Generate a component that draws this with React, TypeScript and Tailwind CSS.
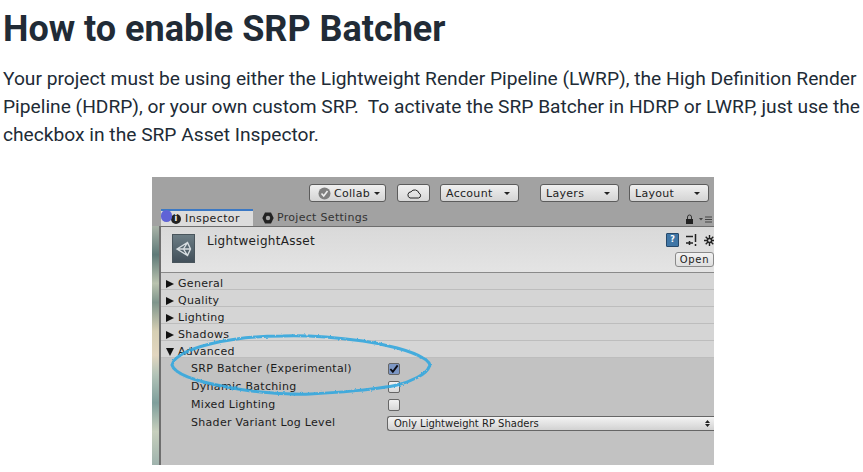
const uiFont = "font-['DejaVu_Sans',sans-serif]";

function Caret() {
  return <span className="ml-auto h-0 w-0 border-x-[3px] border-t-[3px] border-x-transparent border-t-[#222]" />;
}

function ToolButton({ label, w, ml }: { label: string; w: string; ml: string }) {
  return (
    <div className={`flex h-[18px] items-center rounded-[3px] border border-[#5c5c5c] bg-gradient-to-b from-[#f0f0f0] to-[#d4d4d4] pl-[5px] pr-[8px] pt-[1px] text-[11px] leading-[15px] tracking-[0.3px] text-[#222] ${w} ${ml}`}>
      {label}
      <Caret />
    </div>
  );
}

function Foldout({ label, open }: { label: string; open?: boolean }) {
  return (
    <div className="flex h-[17px] items-center border-b border-[#bdbdbd] bg-[#d5d5d5] pl-[5px] pt-[6px] text-[11px] leading-[14px] tracking-[0.3px] text-[#1c1c1c]">
      {open ? (
        <span className="mr-[4px] h-0 w-0 border-x-[4.5px] border-t-[8px] border-x-transparent border-t-[#111]" />
      ) : (
        <span className="mr-[4px] h-0 w-0 border-y-[4.5px] border-l-[8px] border-y-transparent border-l-[#111]" />
      )}
      {label}
    </div>
  );
}

function Checkbox({ checked }: { checked?: boolean }) {
  return (
    <div className={`flex h-[12px] w-[12px] items-center justify-center rounded-[2px] border border-[#666] ${checked ? "bg-[#7d97c4]" : "bg-gradient-to-b from-[#f2f2f2] to-[#d8d8d8]"}`}>
      {checked && (
        <svg width="11" height="10" viewBox="0 0 11 10">
          <path d="M1.5 5 L4.2 8 L9.5 1" fill="none" stroke="#0c0c14" strokeWidth="2" />
        </svg>
      )}
    </div>
  );
}

function SettingRow({ label, children }: { label: string; children: React.ReactNode }) {
  return (
    <div className="flex h-[18px] items-center pl-[30px] text-[11px] leading-[14px] tracking-[0.3px] text-[#1c1c1c]">
      <span className="w-[197px] shrink-0">{label}</span>
      {children}
    </div>
  );
}

function InspectorShot() {
  return (
    <div className={`relative ml-[152px] mt-[28px] flex h-[288px] w-[562px] flex-col overflow-hidden bg-[#a2a2a2] ${uiFont}`}>
      {/* top toolbar */}
      <div className="flex h-[32px] shrink-0 items-center pl-[157px]">
        <div className="flex h-[18px] w-[77px] items-center rounded-[3px] border border-[#5c5c5c] bg-gradient-to-b from-[#f0f0f0] to-[#d4d4d4] pl-[8px] pr-[5px] pt-[1px] text-[11px] leading-[15px] tracking-[0.3px] text-[#222]">
          <svg width="13" height="13" viewBox="0 0 13 13" className="mr-[3px] shrink-0">
            <circle cx="6.5" cy="6.5" r="6" fill="#7f7f7f" />
            <path d="M3.5 6.5 L5.7 9 L9.5 4" fill="none" stroke="#eee" strokeWidth="1.6" />
          </svg>
          Collab
          <Caret />
        </div>
        <div className="ml-[11px] flex h-[18px] w-[33px] items-center justify-center rounded-[3px] border border-[#5c5c5c] bg-gradient-to-b from-[#f0f0f0] to-[#d8d8d8]">
          <svg width="16" height="11" viewBox="0 0 16 11">
            <path d="M4 10 H12.5 A2.5 2.5 0 0 0 13 5.2 A4.5 4.5 0 0 0 5 3.8 A3.2 3.2 0 0 0 4 10 Z" fill="none" stroke="#222" strokeWidth="1" />
          </svg>
        </div>
        <ToolButton label="Account" w="w-[79px]" ml="ml-[10px]" />
        <ToolButton label="Layers" w="w-[79px]" ml="ml-[21px]" />
        <ToolButton label="Layout" w="w-[80px]" ml="ml-[10px]" />
      </div>

      {/* tab strip */}
      <div className="relative flex h-[17px] shrink-0 items-end pl-[9px] text-[11px] leading-[14px] tracking-[0.4px]">
        <div className="flex h-[17px] w-[92px] items-center border-t-2 border-[#3b78c4] bg-[#dcdcdc] pl-[10px] text-[#222]">
          <span className="mr-[4px] flex h-[10px] w-[10px] items-center justify-center rounded-full bg-[#222] text-[8px] font-bold leading-none text-white">i</span>
          Inspector
        </div>
        <div className="flex h-[17px] items-center pl-[9px] tracking-[0.3px] text-[#333]">
          <svg width="12" height="12" viewBox="0 0 12 12" className="mr-[3px]">
            <path d="M3 .5 H9 L11.7 6 L9 11.5 H3 L.3 6 Z" fill="#222" />
            <circle cx="6" cy="6" r="2.2" fill="#a2a2a2" />
          </svg>
          Project Settings
        </div>
        <div className="absolute left-[9px] top-[1px] h-[12px] w-[11px] rounded-full bg-[#5f63d6]" />
        <div className="ml-auto flex items-center gap-[5px] pb-[2px] pr-[2px]">
          <svg width="9" height="10" viewBox="0 0 9 10">
            <path d="M2.5 5 V3 A2 2 0 0 1 6.5 3 V5" fill="none" stroke="#333" />
            <rect x="1" y="5" width="7" height="5" fill="#222" />
          </svg>
          <svg width="13" height="7" viewBox="0 0 13 7">
            <path d="M0 2 H4 L2 4.5 Z" fill="#444" />
            <path d="M6 1 H13 M6 3.5 H13 M6 6 H13" stroke="#444" />
          </svg>
        </div>
      </div>

      {/* body, with the scenery sliver on the left */}
      <div className="flex min-h-0 flex-1">
        <div className="w-[7px] shrink-0 bg-[linear-gradient(180deg,#a9b3a8_0%,#5f7a78_12%,#b9c2ae_24%,#7f958c_32%,#d6cfb4_44%,#e2d6c0_54%,#b4c4b8_62%,#7f9f9c_74%,#c7cfbd_86%,#9fb3ad_100%)]" />
        <div className="flex min-w-0 flex-1 flex-col border-l-2 border-t border-[#6e6e6e]">
          <div className="flex h-[46px] shrink-0 border-b border-[#8a8a8a] bg-gradient-to-b from-[#d9d9d9] to-[#e4e4e4]">
            <div className="ml-[11px] mt-[7px] flex h-[29px] w-[23px] items-center justify-center border border-[#49555c] bg-gradient-to-b from-[#6c7d85] to-[#42505a]">
              <svg width="18" height="18" viewBox="0 0 18 18">
                <path d="M2 9 L12.5 2.5 L15.5 9 L12.5 15.5 Z M2 9 H15.5 M12.5 2.5 L8.5 9 L12.5 15.5" fill="none" stroke="#d7dde0" strokeWidth="1.4" />
              </svg>
            </div>
            <span className="ml-[12px] mt-[5px] text-[12px] leading-[18px] tracking-[0.3px] text-[#222]">LightweightAsset</span>
            <div className="ml-auto flex flex-col items-end">
              <div className="mt-[6px] flex items-center gap-[7px]">
                <div className="flex h-[14px] w-[13px] items-center justify-center rounded-[1px] border border-[#26496b] bg-[#3f76a6] text-[8px] font-bold leading-none text-white">?</div>
                <svg width="11" height="12" viewBox="0 0 11 12">
                  <path d="M0 2.5 H7 M0 9 H7 M9.5 0 V8 M9.5 10 V12 M3.5 7 V11" stroke="#222" strokeWidth="1.5" />
                </svg>
                <svg width="10" height="11" viewBox="0 0 10 11">
                  <path d="M5.5 0 V11 M0 5.5 H10 M1.7 1.7 L9.3 9.3 M9.3 1.7 L1.7 9.3" stroke="#222" strokeWidth="1.4" />
                  <circle cx="5.5" cy="5.5" r="2.8" fill="#222" />
                  <circle cx="5.5" cy="5.5" r="1.3" fill="#dddddd" />
                </svg>
              </div>
              <div className="mt-[5px] flex h-[15px] w-[39px] items-center justify-center rounded-[3px] border border-[#8a8a8a] bg-gradient-to-b from-[#f2f2f2] to-[#dedede] text-[10px] tracking-[0.7px] text-[#222]">
                Open
              </div>
            </div>
          </div>
          <Foldout label="General" />
          <Foldout label="Quality" />
          <Foldout label="Lighting" />
          <Foldout label="Shadows" />
          <Foldout label="Advanced" open />
          <div className="flex-1 bg-[#c2c2c2] pt-[2px]">
            <SettingRow label="SRP Batcher (Experimental)"><Checkbox checked /></SettingRow>
            <SettingRow label="Dynamic Batching"><Checkbox /></SettingRow>
            <SettingRow label="Mixed Lighting"><Checkbox /></SettingRow>
            <SettingRow label="Shader Variant Log Level">
              <div className="-ml-[1px] flex h-[15px] min-w-0 flex-1 items-center rounded-l-[3px] border-y border-l border-[#666] bg-gradient-to-b from-[#f4f4f4] to-[#d2d2d2] pl-[6px] pr-[4px] text-[10px] leading-[13px] tracking-normal text-[#1c1c1c]">
                Only Lightweight RP Shaders
                <svg width="5" height="7" viewBox="0 0 5 7" className="ml-auto">
                  <path d="M2.5 0 L5 3 H0 Z M0 4 H5 L2.5 7 Z" fill="#222" />
                </svg>
              </div>
            </SettingRow>
          </div>
        </div>
      </div>

      {/* hand drawn blue ellipse over the panel */}
      <svg className="pointer-events-none absolute left-0 top-0" width="562" height="288" viewBox="152 177 562 288">
        <defs>
          <filter id="rough" x="-5%" y="-20%" width="110%" height="140%">
            <feTurbulence type="fractalNoise" baseFrequency="0.35" numOctaves="2" seed="4" />
            <feDisplacementMap in="SourceGraphic" scale="2.5" />
          </filter>
        </defs>
        <path
          d="M172 365 C174 356 190 349 210 344 C235 338 260 336 283 336 C310 335 340 338 363 341 C385 344 412 351 423 358 C429 361 431 365 429 367 C427 374 410 382 397 385 C380 389 335 393 310 394 C290 395 250 392 227 387 C205 383 175 376 172 365"
          fill="none"
          stroke="#35a8de"
          strokeWidth="3"
          strokeLinecap="round"
          opacity="0.9"
          filter="url(#rough)"
        />
      </svg>
    </div>
  );
}

export default function App() {
  return (
    <div className="h-[472px] w-[863px] overflow-hidden bg-white font-['Roboto',sans-serif]">
      <h1 className="pl-[3px] pt-[8px] text-[36px] font-bold leading-[42px] text-[#212b36]">How to enable SRP Batcher</h1>
      <p className="mt-[15px] w-[863px] whitespace-pre px-[3px] text-[19.2px] leading-[28px] text-[#212b36]">
        {"Your project must be using either the Lightweight Render Pipeline (LWRP), the High Definition Render\nPipeline (HDRP), or your own custom SRP.  To activate the SRP Batcher in HDRP or LWRP, just use the\ncheckbox in the SRP Asset Inspector."}
      </p>
      <InspectorShot />
    </div>
  );
}
